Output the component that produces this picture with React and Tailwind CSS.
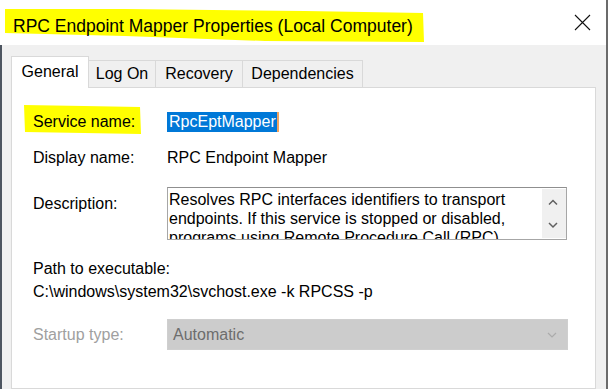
import React from 'react';

const tabs = [
  { label: 'Log On', w: 'w-[67px]' },
  { label: 'Recovery', w: 'w-[87px]' },
  { label: 'Dependencies', w: 'w-[120px]' },
];

export default function App() {
  return (
    <div className="w-[608px] h-[389px] overflow-hidden flex flex-col bg-[#f0f0f0] text-black font-['Liberation_Sans',Arial,sans-serif]">
      {/* Title bar */}
      <div className="relative h-[45px] shrink-0 bg-white flex items-center border-r-2 border-[#6b6b6b]">
        <svg className="absolute left-[5px] top-[8px]" width="420" height="36" viewBox="0 0 420 36">
          <polygon points="0,1 120,1 300,3 418,5 419,34 260,33 120,28 0,25" fill="#ffff00" />
        </svg>
        <span className="relative pl-[13px] pt-[6px] text-[17.5px] leading-[22px]">
          RPC Endpoint Mapper Properties (Local Computer)
        </span>
        <svg className="absolute left-[574px] top-[14px]" width="17" height="17" viewBox="0 0 17 17">
          <path d="M1 1 L16 16 M16 1 L1 16" stroke="#111" strokeWidth="1.1" fill="none" />
        </svg>
      </div>

      {/* Body */}
      <div className="flex-1 flex flex-col border-l-2 border-l-[#4d5560] border-r-2 border-r-[#6b6b6b] pl-[9px] pr-[10px] pt-[11px] text-[16px] leading-[20px]">
        {/* Tabs */}
        <div className="flex items-end h-[31px]">
          <div className="relative z-10 w-[78px] h-[32px] -mb-px bg-white border border-b-0 border-[#d9d9d9] flex items-center justify-center pb-[2px]">
            General
          </div>
          {tabs.map(({ label, w }) => (
            <div key={label} className={`${w} h-[27px] border-t border-r border-[#d9d9d9] flex items-center justify-center`}>
              {label}
            </div>
          ))}
        </div>

        {/* Panel */}
        <div className="flex-1 bg-white border border-[#d9d9d9] pl-[21px] pt-[24px]">
          <div className="flex items-center h-[20px]">
            <div className="relative w-[134px] shrink-0">
              <svg className="absolute left-[-9px] top-[-7px]" width="118" height="30" viewBox="0 0 118 30">
                <polygon points="0,0 60,1 116,2 117,29 60,28 1,27" fill="#ffff00" />
              </svg>
              <span className="relative">Service name:</span>
            </div>
            <span className="bg-[#0078d7] text-white pl-[2px] pr-[1px]">RpcEptMapper</span>
            <span className="w-[2px] h-[20px] bg-[#f2a35e]" />
          </div>

          <div className="flex items-center h-[20px] mt-[16px]">
            <div className="w-[134px] shrink-0">Display name:</div>
            <span>RPC Endpoint Mapper</span>
          </div>

          <div className="flex items-start mt-[19px]">
            <div className="w-[134px] shrink-0 mt-[7px]">Description:</div>
            <div className="w-[400px] h-[53px] flex border border-[#a6a6a6] border-t-[#8f8f8f]">
              <div className="flex-1 overflow-hidden pl-[1px] pt-[2px] leading-[19px]">
                Resolves RPC interfaces identifiers to transport endpoints. If this service is stopped or disabled, programs using Remote Procedure Call (RPC) services will not function properly.
              </div>
              <div className="w-[24px] my-[1px] bg-[#f0f0f0]">
                <svg width="24" height="49" viewBox="0 0 24 49">
                  <polyline points="7,15.5 11,11.5 15,15.5" stroke="#606060" strokeWidth="1.5" fill="none" />
                  <polyline points="7,34 11,38 15,34" stroke="#606060" strokeWidth="1.5" fill="none" />
                </svg>
              </div>
            </div>
          </div>

          <div className="mt-[19px]">Path to executable:</div>
          <div className="mt-[3px]">{'C:\\windows\\system32\\svchost.exe -k RPCSS -p'}</div>

          <div className="flex items-center mt-[17px]">
            <div className="w-[134px] shrink-0 text-[#a0a0a0]">Startup type:</div>
            <div className="w-[401px] h-[31px] flex items-center justify-between bg-[#cccccc] border border-[#cfcfcf] pl-[5px] pr-[10px] text-[#6d6d6d]">
              <span>Automatic</span>
              <svg width="10" height="6" viewBox="0 0 10 6">
                <polyline points="1,1 5,5 9,1" stroke="#ababab" strokeWidth="1.2" fill="none" />
              </svg>
            </div>
          </div>
        </div>
      </div>
    </div>
  );
}
